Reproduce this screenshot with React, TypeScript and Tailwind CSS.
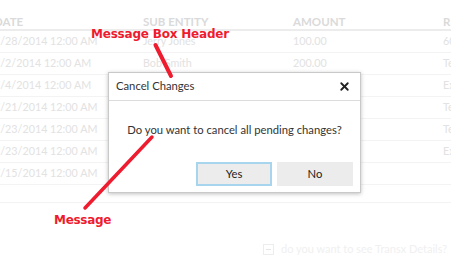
import { X } from "lucide-react";

const rows = [
  { date: "7/28/2014 12:00 AM", sub: "Jerry Jones", amount: "100.00", re: "6000" },
  { date: "7/2/2014 12:00 AM", sub: "Bob Smith", amount: "200.00", re: "Test" },
  { date: "7/4/2014 12:00 AM", sub: "", amount: "", re: "Exp" },
  { date: "7/21/2014 12:00 AM", sub: "", amount: "", re: "Test" },
  { date: "7/23/2014 12:00 AM", sub: "", amount: "", re: "Test" },
  { date: "7/23/2014 12:00 AM", sub: "", amount: "", re: "Exp" },
  { date: "7/15/2014 12:00 AM", sub: "", amount: "", re: "" },
];

export default function App() {
  return (
    <div
      className="relative w-[451px] h-[272px] overflow-hidden bg-white"
      style={{ fontFamily: 'Lato, "Open Sans", sans-serif' }}
    >
      {/* faded grid behind the dialog */}
      <div className="pt-[15px] -ml-[6px] text-[10.75px] text-[#e2e2e2]">
        <div className="flex h-[16px] items-center border-b-2 border-[#ececec] text-[11.5px] font-bold text-[#dadada]">
          <div className="w-[149px] shrink-0">DATE</div>
          <div className="w-[150px] shrink-0">SUB ENTITY</div>
          <div className="w-[150px] shrink-0">AMOUNT</div>
          <div className="shrink-0">REF</div>
        </div>
        {rows.map((r, i) => (
          <div key={i} className="flex h-[22px] items-center border-b border-[#f3f3f3] whitespace-nowrap">
            <div className="w-[149px] shrink-0">{r.date}</div>
            <div className="w-[150px] shrink-0">{r.sub}</div>
            <div className="w-[150px] shrink-0">{r.amount}</div>
            <div className="shrink-0">{r.re}</div>
          </div>
        ))}
        <div className="h-[18px] border-b border-[#f3f3f3]" />
        <div className="mt-[41px] flex h-[11px] items-center gap-[7px] pl-[269px] text-[11px] text-[#f0f0f0]">
          <div className="flex h-[11px] w-[11px] shrink-0 items-center justify-center border border-[#ededed]">
            <div className="h-px w-[5px] bg-[#e6e6e6]" />
          </div>
          <span className="whitespace-nowrap">do you want to see Transx Details?</span>
        </div>
      </div>

      {/* dialog */}
      <div className="absolute left-[108px] top-[72px] flex h-[121px] w-[253px] flex-col border border-[#c9c9c9] bg-white shadow-[0_1px_4px_rgba(0,0,0,0.25)]">
        <div className="flex h-[28px] shrink-0 items-center justify-between border-b border-[#dcdcdc] pl-[7px] pr-[9px]">
          <span className="text-[11.25px] text-[#333333]">Cancel Changes</span>
          <X className="h-[13px] w-[13px] text-[#222222]" strokeWidth={3.4} />
        </div>
        <div className="flex flex-1 flex-col">
          <div className="mt-[21px] text-center text-[11.25px] text-[#333333]">
            Do you want to cancel all pending changes?
          </div>
          <div className="mt-auto mb-[6px] flex justify-end gap-[5px] pr-[7px]">
            <button className="h-[24px] w-[76px] border-2 border-[#a8d5ee] bg-[#ececec] text-[11.25px] text-[#222222]">
              Yes
            </button>
            <button className="h-[24px] w-[76px] bg-[#ececec] text-[11.25px] text-[#222222]">
              No
            </button>
          </div>
        </div>
      </div>

      {/* annotations */}
      <div
        className="absolute left-[91px] top-[25px] whitespace-nowrap text-[12px] font-bold leading-[18px] tracking-[-0.2px] text-[#ee1c2e]"
        style={{ fontFamily: '"DejaVu Sans", sans-serif' }}
      >
        Message Box Header
      </div>
      <div
        className="absolute left-[54px] top-[211px] whitespace-nowrap text-[12px] font-bold leading-[18px] tracking-[-0.3px] text-[#ee1c2e]"
        style={{ fontFamily: '"DejaVu Sans", sans-serif' }}
      >
        Message
      </div>
      <svg className="pointer-events-none absolute left-0 top-0" width="451" height="272">
        <line x1="155.5" y1="45" x2="171" y2="76" stroke="#ee1c2e" strokeWidth="4" strokeLinecap="round" />
        <line x1="152" y1="137" x2="85" y2="208" stroke="#ee1c2e" strokeWidth="3.5" strokeLinecap="round" />
      </svg>
    </div>
  );
}
